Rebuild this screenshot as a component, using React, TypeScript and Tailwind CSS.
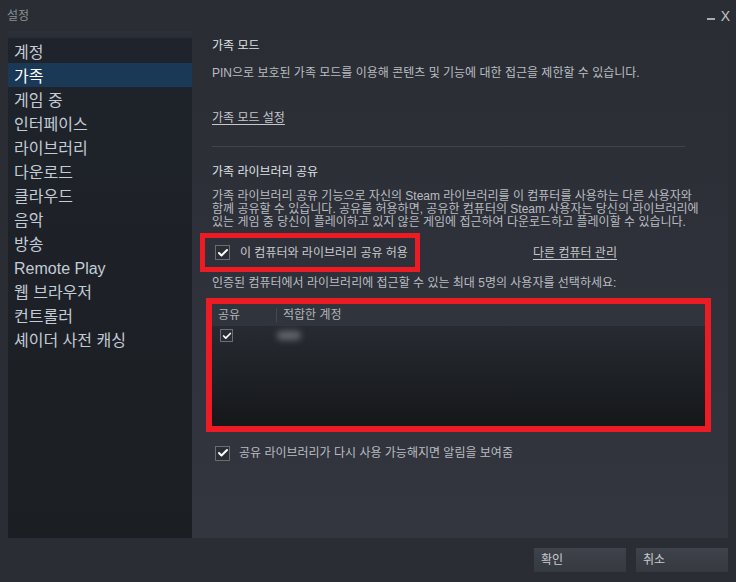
import { Check } from 'lucide-react'

const font = { fontFamily: '"Liberation Sans", "Noto Sans CJK KR", sans-serif' }

const menu = [
  '계정',
  '가족',
  '게임 중',
  '인터페이스',
  '라이브러리',
  '다운로드',
  '클라우드',
  '음악',
  '방송',
  'Remote Play',
  '웹 브라우저',
  '컨트롤러',
  '셰이더 사전 캐싱',
]

function Box({ size = 15 }: { size?: number }) {
  return (
    <span
      className="flex shrink-0 items-center justify-center border border-[#6a6e74] bg-[#2b2e34]"
      style={{ width: size, height: size }}
    >
      <Check className="text-white" size={size - 3} strokeWidth={4} />
    </span>
  )
}

export default function App() {
  return (
    <div className="flex h-[582px] w-[736px] flex-col bg-[#2a2d33] text-[12px]" style={font}>
      {/* title bar */}
      <div className="flex h-[31px] shrink-0 items-center justify-between pl-[7px] pr-[6px]">
        <span className="text-[12px] text-[#8a9097]">설정</span>
        <div className="flex items-center gap-[6px] text-[#c0c4c8]">
          <span className="mt-[6px] h-[2px] w-[8px] bg-[#a8acb0]" />
          <span className="text-[14px] leading-none">X</span>
        </div>
      </div>

      <div className="flex h-[507px] shrink-0 px-[8px]">
        {/* sidebar */}
        <div className="w-[184px] shrink-0 bg-[linear-gradient(to_bottom,#2c313a_0px,#2a2e36_6px,#1f232b_8px,#1b1e22_100%)] pt-[8px]">
          {menu.map((m, i) => (
            <div
              key={i}
              className={
                'flex h-[24px] items-center whitespace-nowrap pl-[6px] pt-[4px] text-[16px] ' +
                (i === 1 ? 'bg-[#1a3957] text-white' : 'text-[#c3ccd6]')
              }
            >
              {m}
            </div>
          ))}
        </div>

        {/* main */}
        <div className="min-w-0 flex-1 bg-[linear-gradient(to_bottom,#2a2d34,#33363f)] pl-[20px]">
          <div className="mt-[7px] leading-[16px] text-[#dfe2e5]">가족 모드</div>
          <div className="mt-[11px] whitespace-nowrap leading-[16px] text-[#b9bdc1]">
            PIN으로 보호된 가족 모드를 이용해 콘텐츠 및 기능에 대한 접근을 제한할 수 있습니다.
          </div>
          <div className="mt-[29px] leading-[16px]">
            <span className="text-[#c5c8cb] underline underline-offset-2">가족 모드 설정</span>
          </div>
          <div className="mr-[43px] mt-[20px] h-px bg-[#3f444d]" />

          <div className="mt-[17px] leading-[16px] text-[#dfe2e5]">가족 라이브러리 공유</div>
          <div className="mt-[10px] whitespace-nowrap leading-[13px] text-[#b9bdc1]">
            가족 라이브러리 공유 기능으로 자신의 Steam 라이브러리를 이 컴퓨터를 사용하는 다른 사용자와
            <br />
            함께 공유할 수 있습니다. 공유를 허용하면, 공유한 컴퓨터의 Steam 사용자는 당신의 라이브러리에
            <br />
            있는 게임 중 당신이 플레이하고 있지 않은 게임에 접근하여 다운로드하고 플레이할 수 있습니다.
          </div>

          <div className="-ml-[12px] mt-[4px] flex items-center">
            <div className="flex h-[39px] w-[220px] items-center gap-[10px] border-[5px] border-[#ed1c24] pl-[10px]">
              <Box />
              <span className="whitespace-nowrap text-[#c8cbce]">이 컴퓨터와 라이브러리 공유 허용</span>
            </div>
            <span className="ml-[113px] text-[#c5c8cb] underline underline-offset-2">다른 컴퓨터 관리</span>
          </div>

          <div className="mt-[3px] leading-[16px] text-[#b9bdc1]">
            인증된 컴퓨터에서 라이브러리에 접근할 수 있는 최대 5명의 사용자를 선택하세요:
          </div>

          {/* table */}
          <div className="-ml-[6px] mt-[7px] h-[134px] w-[505px] border-[6px] border-[#ed1c24]">
            <div className="flex h-full flex-col bg-[linear-gradient(to_bottom,#2b2f36,#15171a)]">
              <div className="flex h-[22px] items-center bg-[#30343c] text-[#b0b4b8]">
                <span className="w-[64px] pl-[6px]">공유</span>
                <span className="h-[14px] w-px bg-[#444850]" />
                <span className="pl-[6px]">적합한 계정</span>
              </div>
              <div className="flex items-center pt-[3px]">
                <span className="ml-[8px]">
                  <Box size={13} />
                </span>
                <span className="ml-[44px] h-[9px] w-[24px] rounded-full bg-[#62666c] blur-[3px]" />
              </div>
            </div>
          </div>

          <div className="ml-[3px] mt-[12px] flex items-center gap-[9px]">
            <Box />
            <span className="text-[#b9bdc1]">공유 라이브러리가 다시 사용 가능해지면 알림을 보여줌</span>
          </div>
        </div>
      </div>

      {/* footer */}
      <div className="flex justify-end gap-[10px] pr-[8px] pt-[10px]">
        <button className="h-[24px] w-[92px] bg-[linear-gradient(to_bottom,#3e434c,#353940)] pl-[7px] text-left text-[#c8cbce]">
          확인
        </button>
        <button className="h-[24px] w-[92px] bg-[linear-gradient(to_bottom,#3e434c,#353940)] pl-[7px] text-left text-[#c8cbce]">
          취소
        </button>
      </div>
    </div>
  )
}
